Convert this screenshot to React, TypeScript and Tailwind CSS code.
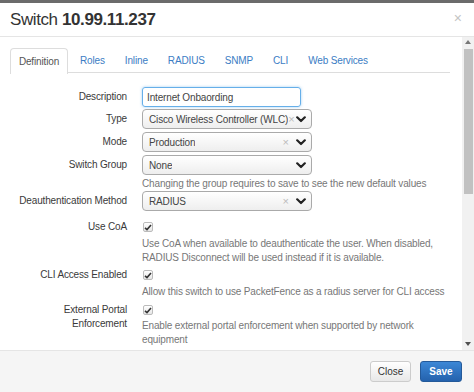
import { ReactNode } from 'react';

const tabs = ['Definition', 'Roles', 'Inline', 'RADIUS', 'SNMP', 'CLI', 'Web Services'];

function Chevron() {
  return (
    <svg width="10" height="7" viewBox="0 0 10 7" className="shrink-0">
      <path d="M1.2 1.3 L5 5 L8.8 1.3" fill="none" stroke="#222" strokeWidth="2.2" strokeLinecap="round" strokeLinejoin="round" />
    </svg>
  );
}

function Select({ value, clear = true, tight = false }: { value: string; clear?: boolean; tight?: boolean }) {
  return (
    <div className="flex h-[20px] w-[170px] items-center rounded-[4px] border border-[#aaa] bg-gradient-to-b from-white to-[#eee] pl-[6px] pr-[5px]">
      <span className="overflow-hidden whitespace-nowrap text-[10px] tracking-[-0.15px] text-[#444]">{value}</span>
      {clear && (
        <span className={`text-[11px] leading-none text-[#bbb] ${tight ? 'ml-0' : 'ml-auto'}`}>×</span>
      )}
      <span className={`${tight || !clear ? 'ml-auto' : 'ml-[7px]'}`}>
        <Chevron />
      </span>
    </div>
  );
}

function Check() {
  return (
    <div className="flex h-[14px] items-center pl-[1px]">
      <span className="flex h-[10px] w-[10px] items-center justify-center rounded-[2px] border border-[#bbb] bg-gradient-to-b from-white to-[#e6e6e6]">
        <svg width="8" height="7" viewBox="0 0 8 7">
          <path d="M1 3.8 L3 5.6 L7 1" fill="none" stroke="#333" strokeWidth="1.6" />
        </svg>
      </span>
    </div>
  );
}

function Row({ label, children, className = '' }: { label: ReactNode; children: ReactNode; className?: string }) {
  return (
    <div className={`flex gap-[15px] ${className}`}>
      <div className="w-[127px] shrink-0 text-right text-[10px] leading-[14px] tracking-[-0.15px] text-[#3a3a3a]">{label}</div>
      <div className="min-w-0 flex-1">{children}</div>
    </div>
  );
}

function Help({ children, className = '' }: { children: ReactNode; className?: string }) {
  return <p className={`w-[308px] text-[10px] leading-[14px] tracking-[-0.15px] text-[#777] ${className}`}>{children}</p>;
}

export default function App() {
  return (
    <div className="flex h-[392px] w-[474px] flex-col overflow-hidden bg-white font-['Liberation_Sans',Arial,sans-serif]">
      <div className="h-[3px] bg-[#6b6b6b]" />

      {/* header */}
      <div className="flex h-[34px] items-center border-b border-[#e5e5e5] pl-[10px] pr-[12px]">
        <h1 className="text-[17px] leading-none tracking-[-0.4px] text-[#333]">
          Switch <b className="font-bold">10.99.11.237</b>
        </h1>
        <span className="ml-auto -mt-[4px] text-[14px] leading-none text-[#c4c4c4]">×</span>
      </div>

      {/* body */}
      <div className="flex min-h-0 flex-1">
        <div className="min-w-0 flex-1 pl-[10px] pr-[12px] pt-[11px]">
          <div className="flex h-[25px] border-b border-[#ddd]">
            {tabs.map((t, i) =>
              i === 0 ? (
                <div
                  key={t}
                  className="-mb-px mr-[2px] flex h-[26px] w-[58px] items-center justify-center rounded-t-[4px] border border-b-0 border-[#ddd] bg-white text-[10px] tracking-[-0.15px] text-[#555]"
                >
                  {t}
                </div>
              ) : (
                <div key={t} className="flex items-center px-[10px] text-[10px] tracking-[-0.15px] text-[#3b7dc4]">
                  {t}
                </div>
              ),
            )}
          </div>

          <div className="mr-[-12px] -ml-[10px] pt-[14px]">
            <Row label={<span className="block pt-[3px]">Description</span>}>
              <div className="flex h-[20px] w-[159px] items-center rounded-[3px] border border-[#66afe9] pl-[4px] text-[10px] tracking-[-0.15px] text-[#444] shadow-[0_0_3px_rgba(102,175,233,0.6)]">
                Internet Onbaording
              </div>
            </Row>
            <Row label={<span className="block pt-[3px]">Type</span>} className="mt-[2px]">
              <Select value="Cisco Wireless Controller (WLC)" tight />
            </Row>
            <Row label={<span className="block pt-[3px]">Mode</span>} className="mt-[3px]">
              <Select value="Production" />
            </Row>
            <Row label={<span className="block pt-[3px]">Switch Group</span>} className="mt-[3px]">
              <Select value="None" clear={false} />
              <p className="mt-[2px] whitespace-nowrap text-[10px] leading-[14px] tracking-[-0.15px] text-[#777]">
                Changing the group requires to save to see the new default values
              </p>
            </Row>
            <Row label={<span className="block pt-[3px]">Deauthentication Method</span>}>
              <Select value="RADIUS" />
            </Row>
            <Row label="Use CoA" className="mt-[9px]">
              <Check />
              <Help className="mt-[3px]">
                Use CoA when available to deauthenticate the user. When disabled, RADIUS Disconnect will be used instead if it is available.
              </Help>
            </Row>
            <Row label="CLI Access Enabled" className="mt-[3px]">
              <Check />
              <Help className="mt-[3px]">Allow this switch to use PacketFence as a radius server for CLI access</Help>
            </Row>
            <Row label={<>External Portal<br />Enforcement</>} className="mt-[4px]">
              <Check />
              <Help className="mt-[2px]">Enable external portal enforcement when supported by network equipment</Help>
            </Row>
          </div>
        </div>

        {/* scrollbar */}
        <div className="flex w-[12px] shrink-0 flex-col items-center bg-[#f1f1f1] pt-[3px] pb-[4px]">
          <svg width="6" height="4" viewBox="0 0 6 4"><path d="M0 4 L3 0 L6 4 Z" fill="#777" /></svg>
          <div className="mt-[5px] h-[145px] w-[9px] bg-[#c1c1c1]" />
          <svg width="6" height="4" viewBox="0 0 6 4" className="mt-auto"><path d="M0 0 L6 0 L3 4 Z" fill="#505050" /></svg>
        </div>
      </div>

      {/* footer */}
      <div className="flex h-[42px] items-center justify-end gap-[9px] border-t border-[#e5e5e5] bg-[#f5f5f5] pr-[12px]">
        <button className="h-[21px] w-[41px] rounded-[3px] border border-[#ccc] bg-gradient-to-b from-white to-[#e8e8e8] text-[10px] text-[#333]">
          Close
        </button>
        <button className="h-[21px] w-[42px] rounded-[3px] border border-[#245a9a] bg-gradient-to-b from-[#3c87d6] to-[#2462ad] text-[10px] font-bold text-white">
          Save
        </button>
      </div>
    </div>
  );
}
